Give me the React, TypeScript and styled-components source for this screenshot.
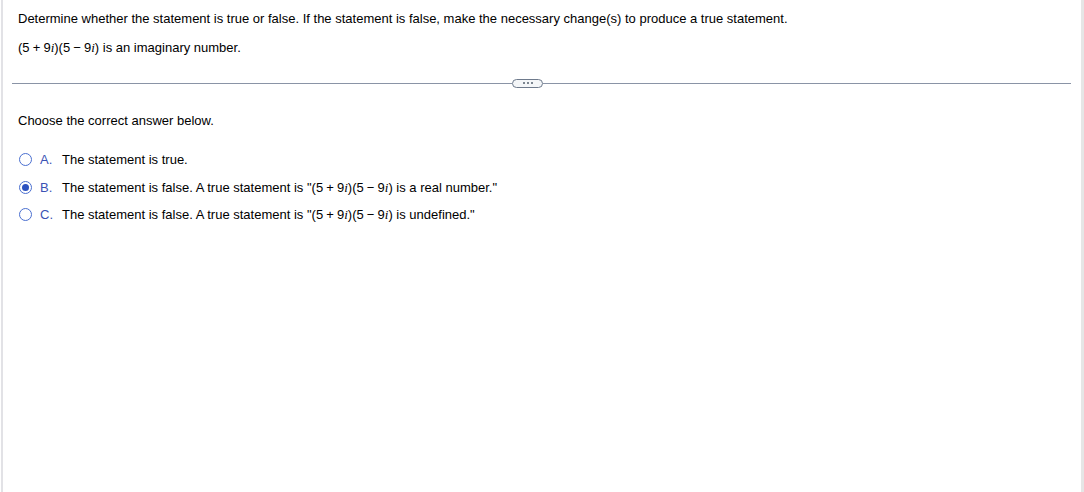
import React from "react";
import styled, { createGlobalStyle } from "styled-components";

const Global = createGlobalStyle`
  html, body { margin: 0; padding: 0; background: #fff; }
  body { font-family: "Liberation Sans", Arial, sans-serif; color: #000; }
`;

const Frame = styled.div`
  width: 1084px;
  height: 492px;
  box-sizing: border-box;
  display: flex;
  background: #fff;
`;

const LeftEdge = styled.div`
  width: 2px;
  margin-left: 1px;
  background: #e2e2e6;
  flex: none;
`;

const Main = styled.div`
  flex: 1;
  display: flex;
  flex-direction: column;
  padding: 0 10px 0 9px;
`;

const RightEdge = styled.div`
  width: 3px;
  background: #e6e6e6;
  flex: none;
`;

const Question = styled.div`
  padding: 11px 0 0 6px;
`;

const Line = styled.p<{ $mt?: number }>`
  margin: ${(p) => p.$mt ?? 0}px 0 0;
  font-size: 13px;
  line-height: 15px;
`;

const Im = styled.span`
  font-family: "Liberation Serif", "Times New Roman", serif;
  font-style: italic;
  font-size: 13px;
`;

const Op = styled.span`
  margin: 0 -0.5px;
`;

const Divider = styled.div`
  margin-top: 23px;
  display: flex;
  align-items: center;
  height: 10px;
`;

const Rule = styled.div<{ $w?: number }>`
  flex: ${(p) => (p.$w ? `0 0 ${p.$w}px` : "1")};
  height: 1px;
  background: #8a94a6;
`;

const Pill = styled.div`
  width: 29px;
  height: 7px;
  border: 1.5px solid #6e7a8c;
  border-radius: 6px;
  background: #f4f6f8;
  display: flex;
  align-items: center;
  justify-content: center;
  gap: 2px;
`;

const Dot = styled.span`
  width: 2px;
  height: 2px;
  border-radius: 1px;
  background: #55606f;
`;

const Prompt = styled.p`
  margin: 25px 0 0 6px;
  font-size: 13px;
  line-height: 15px;
`;

const Options = styled.div`
  margin-top: 24px;
  display: flex;
  flex-direction: column;
  gap: 12.5px;
  padding-left: 6px;
`;

const Option = styled.label`
  display: flex;
  align-items: center;
  font-size: 13px;
  line-height: 15px;
  height: 15px;
`;

const Radio = styled.span<{ $on?: boolean }>`
  width: 11px;
  height: 11px;
  margin-left: 1px;
  border: 1px solid #4a6fd0;
  border-radius: 50%;
  flex: none;
  display: flex;
  align-items: center;
  justify-content: center;
  box-sizing: content-box;
  &::after {
    content: "";
    display: ${(p) => (p.$on ? "block" : "none")};
    width: 7px;
    height: 7px;
    border-radius: 50%;
    background: #2c52c0;
  }
`;

const Letter = styled.span`
  color: #3b52b4;
  margin-left: 8px;
  width: 22px;
  flex: none;
`;

const Txt = styled.span``;

const Expr = () => (
  <>
    (5<Op> + </Op>9<Im>i</Im>)(5<Op> − </Op>9<Im>i</Im>)
  </>
);

export default function App() {
  return (
    <>
      <Global />
      <Frame>
        <LeftEdge />
        <Main>
          <Question>
            <Line>
              Determine whether the statement is true or false. If the statement is false, make the necessary change(s) to produce a true statement.
            </Line>
            <Line $mt={14}>
              <Expr /> is an imaginary number.
            </Line>
          </Question>
          <Divider>
            <Rule $w={500} />
            <Pill>
              <Dot />
              <Dot />
              <Dot />
            </Pill>
            <Rule />
          </Divider>
          <Prompt>Choose the correct answer below.</Prompt>
          <Options>
            <Option>
              <Radio />
              <Letter>A.</Letter>
              <Txt>The statement is true.</Txt>
            </Option>
            <Option>
              <Radio $on />
              <Letter>B.</Letter>
              <Txt>
                The statement is false. A true statement is "<Expr /> is a real number."
              </Txt>
            </Option>
            <Option>
              <Radio />
              <Letter>C.</Letter>
              <Txt>
                The statement is false. A true statement is "<Expr /> is undefined."
              </Txt>
            </Option>
          </Options>
        </Main>
        <RightEdge />
      </Frame>
    </>
  );
}
